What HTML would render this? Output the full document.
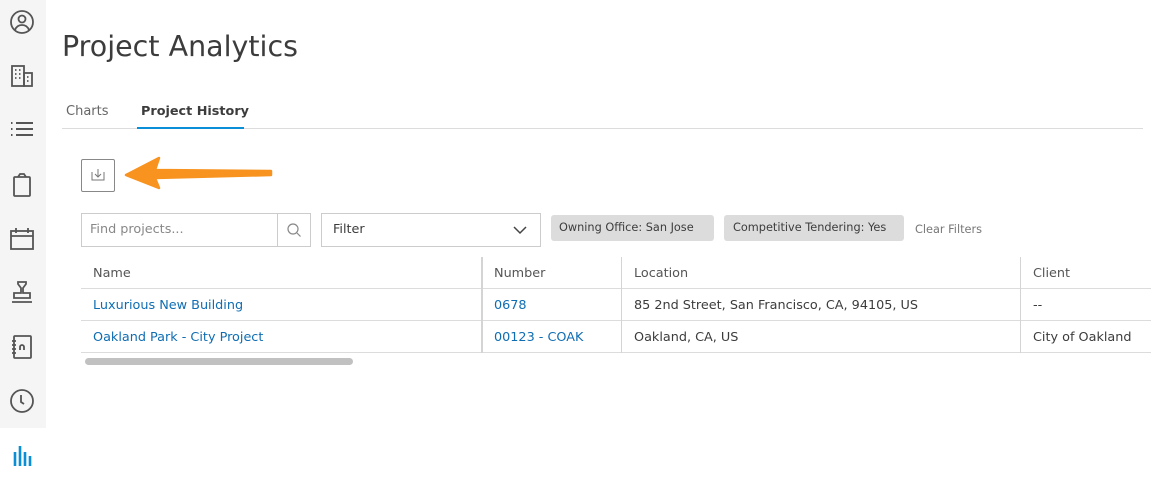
<!DOCTYPE html>
<html><head><meta charset="utf-8"><style>
*{box-sizing:border-box;margin:0;padding:0}
body{width:1155px;height:478px;background:#fff;font-family:"DejaVu Sans","Liberation Sans",sans-serif;color:#3c3c3c;position:relative;overflow:hidden}
.side{position:absolute;left:0;top:0;width:46px;height:428px;background:#f5f5f5}
.ic{position:absolute;left:8px;width:28px;height:28px}
.abs{position:absolute;white-space:nowrap}
.t{font-size:12.8px}
a{color:#0f6db3;text-decoration:none}
.hl{position:absolute;height:1px;background:#dcdcdc}
.vl{position:absolute;width:1px;background:#d4d4d4}
</style></head><body>
<div class="side"></div>
<svg class="ic" style="top:8px" viewBox="0 0 28 28" fill="none" stroke="#555" stroke-width="1.8"><circle cx="14" cy="14" r="11"/><circle cx="14" cy="11" r="3.5"/><path d="M7 22c1.5-4 4-5 7-5s5.5 1 7 5"/></svg>
<svg class="ic" style="top:62px" viewBox="0 0 28 28" fill="none" stroke="#555" stroke-width="1.8"><rect x="4" y="4" width="12" height="20"/><rect x="16" y="11" width="8" height="13"/><path d="M7 8h1.5M11 8h1.5M7 12h1.5M11 12h1.5M7 16h1.5M11 16h1.5M19 15h1.5M19 19h1.5"/></svg>
<svg class="ic" style="top:116px" viewBox="0 0 28 28" fill="none" stroke="#555" stroke-width="2"><path d="M3 7h1.5M3 13h1.5M3 19h1.5M8 7h17M8 13h17M8 19h17"/></svg>
<svg class="ic" style="top:171px" viewBox="0 0 28 28" fill="none" stroke="#555" stroke-width="1.8"><rect x="6" y="6" width="16" height="19" rx="1"/><path d="M10 6l2-3h4l2 3"/></svg>
<svg class="ic" style="top:225px" viewBox="0 0 28 28" fill="none" stroke="#555" stroke-width="1.8"><rect x="3" y="6" width="22" height="18"/><path d="M3 11h22M8 3v5M20 3v5"/></svg>
<svg class="ic" style="top:279px" viewBox="0 0 28 28" fill="none" stroke="#555" stroke-width="1.8"><path d="M10 3h8v2l-3 4v5h7v5H6v-5h7v-5l-3-4z"/><path d="M4 23h20"/></svg>
<svg class="ic" style="top:333px" viewBox="0 0 28 28" fill="none" stroke="#555" stroke-width="1.8"><rect x="6" y="3" width="17" height="22" rx="1"/><path d="M4 8h4M4 12h4M4 16h4M4 20h4M12 17v-3a2 2 0 014 0v3"/></svg>
<svg class="ic" style="top:387px" viewBox="0 0 28 28" fill="none" stroke="#555" stroke-width="1.8"><circle cx="14" cy="14" r="11"/><path d="M13 8v7l3 2"/></svg>
<svg class="ic" style="top:442px" viewBox="0 0 28 28" fill="none" stroke="#0a8fd6" stroke-width="2.6"><path d="M7 10v14M12 4v20M17 10v14M22 14v10"/></svg>

<div class="abs" style="left:62px;top:30px;font-size:28.5px;color:#3c3c3c">Project Analytics</div>
<div class="abs" style="left:66px;top:104px;color:#666;font-size:13px">Charts</div>
<div class="abs" style="left:141px;top:104px;font-weight:bold;font-size:12.8px">Project History</div>
<div class="hl" style="left:62px;top:128px;width:1081px"></div>
<div class="abs" style="left:137px;top:127px;width:107px;height:2px;background:#0a8fd6"></div>

<div class="abs" style="left:81px;top:159px;width:34px;height:33px;border:1px solid #888;border-radius:2px"></div>
<svg class="abs" style="left:89px;top:166px" width="18" height="18" viewBox="0 0 18 18" fill="none" stroke="#777" stroke-width="1"><path d="M3 6v8h12V6M9 3v8M6 8l3 3 3-3"/></svg>
<svg class="abs" style="left:120px;top:150px" width="160" height="40" viewBox="0 0 160 40"><path d="M6 25L39 8 35 20 151 21 151 25 35 28 39 38Z" fill="#f7931e" stroke="#f7931e" stroke-linejoin="round" stroke-width="2.5"/></svg>

<div class="abs" style="left:81px;top:213px;width:230px;height:34px;border:1px solid #ccc"></div>
<div class="vl" style="left:277px;top:213px;height:34px;background:#ccc"></div>
<div class="abs t" style="left:90px;top:222px;color:#888">Find projects...</div>
<svg class="abs" style="left:285px;top:221px" width="18" height="18" viewBox="0 0 18 18" fill="none" stroke="#888" stroke-width="1.2"><circle cx="8" cy="8" r="5"/><path d="M12 12l3.5 3.5"/></svg>
<div class="abs" style="left:321px;top:213px;width:220px;height:34px;border:1px solid #ccc"></div>
<div class="abs t" style="left:333px;top:222px">Filter</div>
<svg class="abs" style="left:513px;top:225px" width="14" height="10" viewBox="0 0 14 10" fill="none" stroke="#444" stroke-width="1.5"><path d="M1 2l6 6 6-6"/></svg>
<div class="abs" style="left:551px;top:215px;width:163px;height:26px;background:#dcdcdc;border-radius:3px"></div>
<div class="abs" style="left:559px;top:221px;font-size:11.3px">Owning Office: San Jose</div>
<div class="abs" style="left:724px;top:215px;width:180px;height:26px;background:#dcdcdc;border-radius:3px"></div>
<div class="abs" style="left:733px;top:221px;font-size:11.3px">Competitive Tendering: Yes</div>
<div class="abs" style="left:915px;top:223px;font-size:11.3px;color:#777">Clear Filters</div>

<div class="hl" style="left:81px;top:288px;width:1070px"></div>
<div class="hl" style="left:81px;top:320px;width:1070px"></div>
<div class="hl" style="left:81px;top:352px;width:1070px"></div>
<div class="vl" style="left:481px;top:257px;height:96px;width:2px"></div>
<div class="vl" style="left:621px;top:257px;height:96px"></div>
<div class="vl" style="left:1020px;top:257px;height:96px"></div>
<div class="abs t" style="left:93px;top:266px;color:#555">Name</div>
<div class="abs t" style="left:494px;top:266px;color:#555">Number</div>
<div class="abs t" style="left:634px;top:266px;color:#555">Location</div>
<div class="abs t" style="left:1033px;top:266px;color:#555">Client</div>
<div class="abs t" style="left:93px;top:298px"><a>Luxurious New Building</a></div>
<div class="abs t" style="left:494px;top:298px"><a>0678</a></div>
<div class="abs t" style="left:634px;top:298px">85 2nd Street, San Francisco, CA, 94105, US</div>
<div class="abs t" style="left:1033px;top:298px">--</div>
<div class="abs t" style="left:93px;top:330px"><a>Oakland Park - City Project</a></div>
<div class="abs t" style="left:494px;top:330px"><a>00123 - COAK</a></div>
<div class="abs t" style="left:634px;top:330px">Oakland, CA, US</div>
<div class="abs t" style="left:1033px;top:330px">City of Oakland</div>
<div class="abs" style="left:85px;top:358px;width:268px;height:7px;background:#c1c1c1;border-radius:4px"></div>
</body></html>
